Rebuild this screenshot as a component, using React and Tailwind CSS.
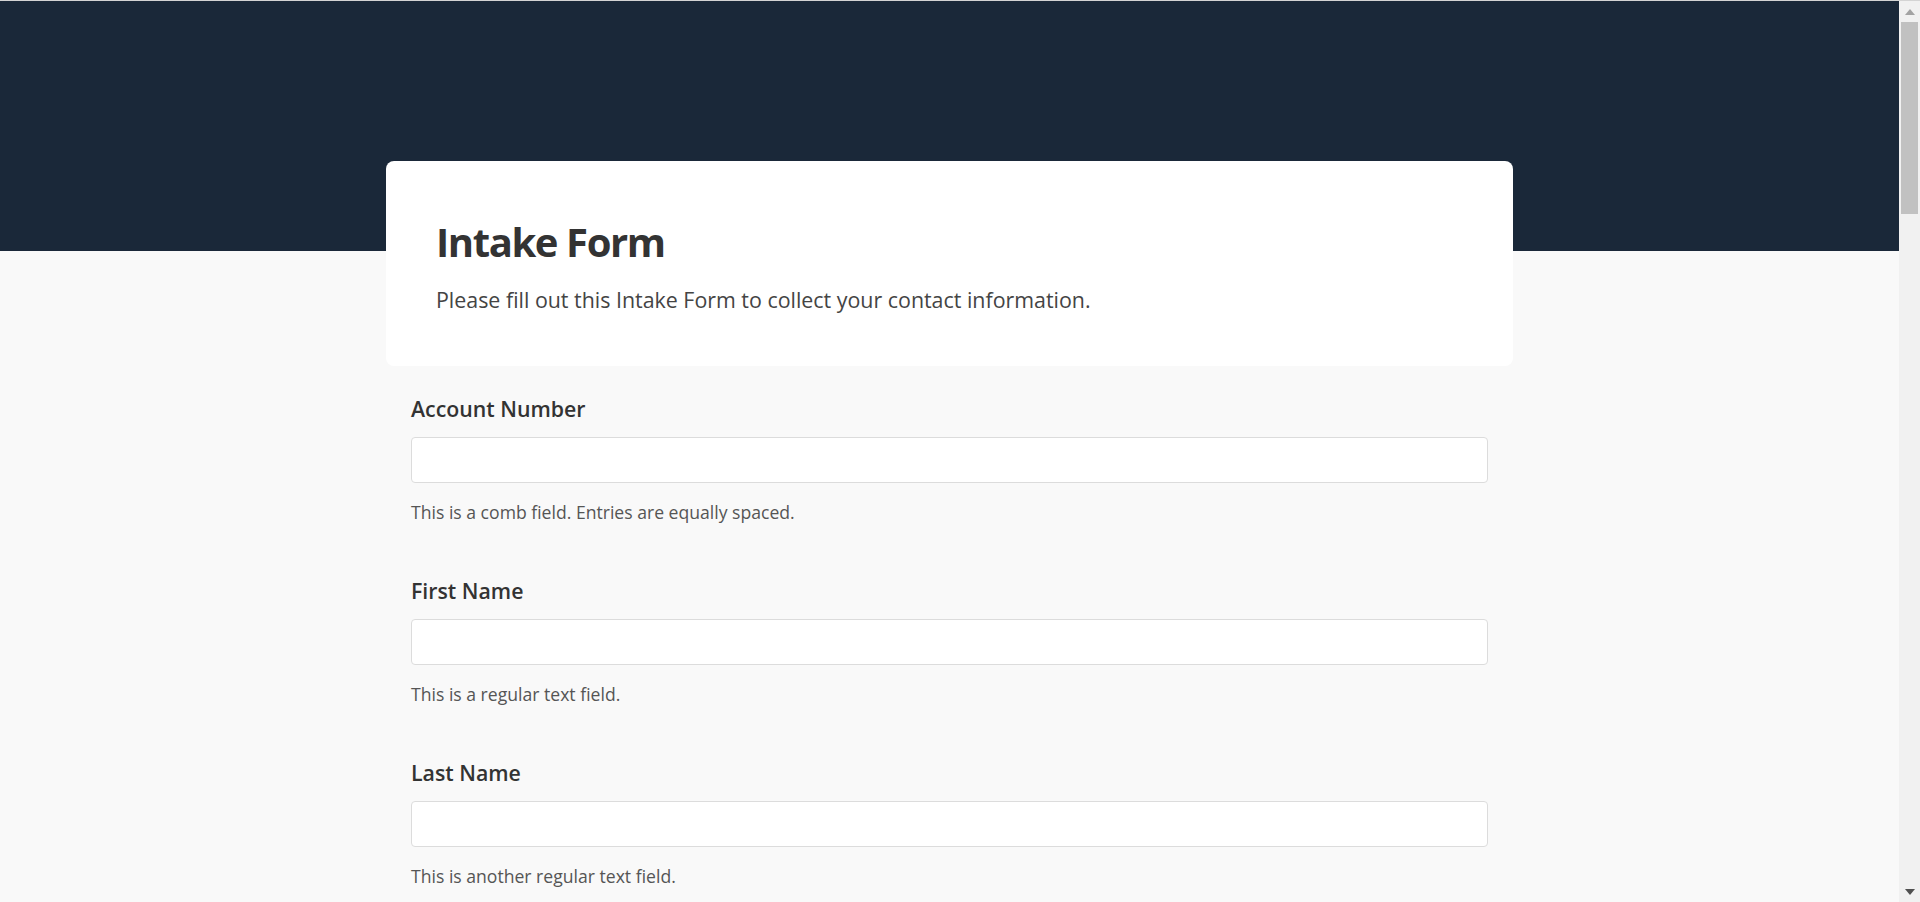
import React from "react";

function Field({ label, help }) {
  return (
    <div className="flex flex-col mb-[51px]">
      <label className="text-[21.3px] leading-[27px] font-semibold text-[#333333]">{label}</label>
      <input
        type="text"
        className="mt-[15px] h-[46px] w-full rounded-[4px] border border-[#dcdcdc] bg-white px-3 outline-none"
      />
      <p className="mt-[16px] text-[17.6px] leading-[27px] text-[#555555]">{help}</p>
    </div>
  );
}

function Scrollbar() {
  return (
    <div className="w-[21px] h-full shrink-0 bg-[#f1f1f1] flex flex-col items-center">
      <div className="h-[21px] w-full flex items-center justify-center">
        <svg width="10" height="6" viewBox="0 0 10 6">
          <polygon points="5,0 10,6 0,6" fill="#a3a3a3" />
        </svg>
      </div>
      <div className="w-[17px] h-[192px] bg-[#c1c1c1]" />
      <div className="flex-1" />
      <div className="h-[21px] w-full flex items-center justify-center">
        <svg width="10" height="6" viewBox="0 0 10 6">
          <polygon points="0,0 10,0 5,6" fill="#505050" />
        </svg>
      </div>
    </div>
  );
}

export default function App() {
  return (
    <div className="h-[902px] flex border-t border-[#d4d4d4] bg-[#f9f9f9] overflow-hidden font-['Open_Sans','Noto_Sans',sans-serif]">
      <div className="flex-1 h-full overflow-hidden">
        <div className="h-[250px] bg-[#1a2839]" />
        <div className="mx-auto w-[1127px] -mt-[90px]">
          <div className="rounded-[8px] bg-white pl-[50px] pr-[50px] pt-[54px] pb-[49px]">
            <h1 className="text-[40px] leading-[54px] font-bold tracking-[-1.4px] text-[#333333]">Intake Form</h1>
            <p className="mt-[14px] text-[21.4px] leading-[34px] text-[#444444]">
              Please fill out this Intake Form to collect your contact information.
            </p>
          </div>
          <div className="px-[25px] pt-[29px]">
            <Field label="Account Number" help="This is a comb field. Entries are equally spaced." />
            <Field label="First Name" help="This is a regular text field." />
            <Field label="Last Name" help="This is another regular text field." />
          </div>
        </div>
      </div>
      <Scrollbar />
    </div>
  );
}
